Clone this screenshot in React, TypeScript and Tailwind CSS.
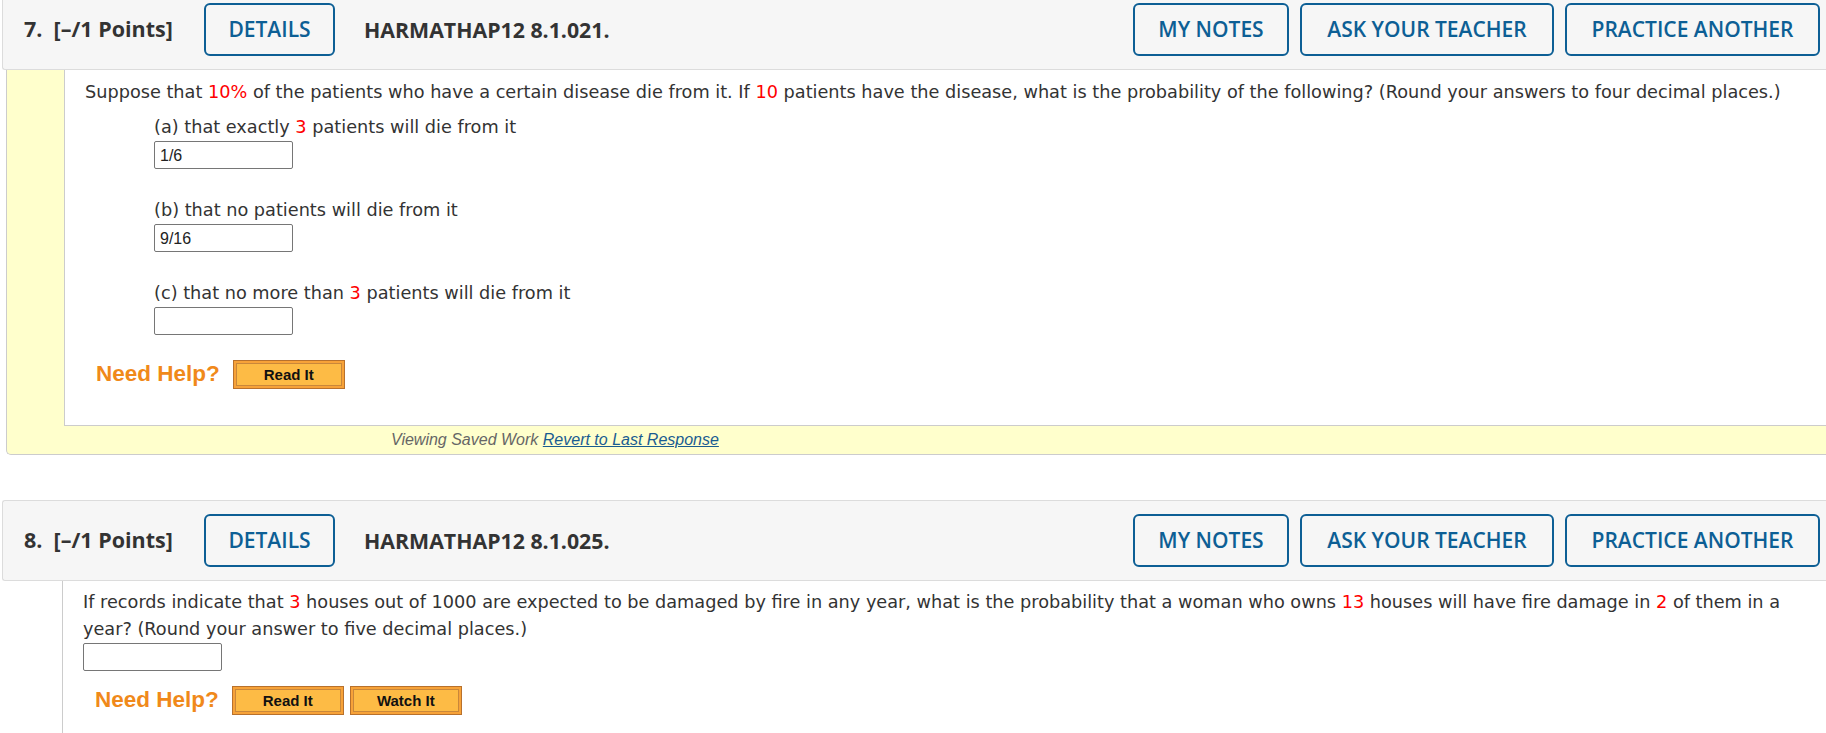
import React from "react";

const body = { fontFamily: '"DejaVu Sans", Verdana, sans-serif' };
const head = { fontFamily: '"Open Sans", "Liberation Sans", sans-serif' };
const arial = { fontFamily: '"Liberation Sans", Arial, sans-serif' };

const Red: React.FC<{ children: React.ReactNode }> = ({ children }) => (
  <span className="text-[#ff0000]">{children}</span>
);

const OutlineButton: React.FC<{ label: string; width: string }> = ({ label, width }) => (
  <button
    className={`${width} h-[53px] shrink-0 rounded-[6px] border-2 border-[#0d5f95] bg-[#f6f6f6] text-[21px] font-semibold text-[#0d5f95] flex items-center justify-center`}
    style={head}
  >
    {label}
  </button>
);

const HelpButton: React.FC<{ label: string }> = ({ label }) => (
  <button className="w-[112px] h-[29px] border border-[#b8712c] bg-[#f7a238] p-[2px] shrink-0">
    <div
      className="h-full w-full border border-[#c9873a] bg-[#fdbb45] flex items-center justify-center text-[15px] font-bold text-[#111] leading-none"
      style={arial}
    >
      {label}
    </div>
  </button>
);

const QuestionHeader: React.FC<{ num: number; code: string }> = ({ num, code }) => (
  <div className="ml-[2px] h-[81px] border-t border-l border-b border-[#dcdcdc] rounded-l-[3px] bg-[#f6f6f6] flex items-center pr-[6px]">
    <div className="w-[201px] pl-[21px] shrink-0 text-[21.5px] font-bold text-[#333] whitespace-nowrap" style={head}>
      {num}.&nbsp;&nbsp;[–/1 Points]
    </div>
    <OutlineButton label="DETAILS" width="w-[131px]" />
    <div className="ml-[29px] text-[21.3px] font-bold text-[#333] whitespace-nowrap" style={head}>
      {code}
    </div>
    <div className="ml-auto flex items-center gap-[11px]">
      <OutlineButton label="MY NOTES" width="w-[156px]" />
      <OutlineButton label="ASK YOUR TEACHER" width="w-[254px]" />
      <OutlineButton label="PRACTICE ANOTHER" width="w-[255px]" />
    </div>
  </div>
);

const AnswerBox: React.FC<{ value?: string; className?: string }> = ({ value, className }) => (
  <div
    className={`w-[139px] h-[28px] border border-[#767676] rounded-[2px] bg-white px-[5px] flex items-center text-[16px] text-[#222] ${className ?? ""}`}
    style={arial}
  >
    {value}
  </div>
);

const NeedHelp: React.FC<{ buttons: string[] }> = ({ buttons }) => (
  <div className="flex items-center">
    <span className="text-[22.5px] font-bold text-[#f0891a] mr-[13px] leading-none" style={arial}>
      Need Help?
    </span>
    <div className="flex gap-[6px]">
      {buttons.map((b) => (
        <HelpButton key={b} label={b} />
      ))}
    </div>
  </div>
);

const parts = [
  { label: "(a) that exactly ", num: "3", rest: " patients will die from it", value: "1/6" },
  { label: "(b) that no patients will die from it", num: "", rest: "", value: "9/16" },
  { label: "(c) that no more than ", num: "3", rest: " patients will die from it", value: "" },
];

export default function App() {
  return (
    <div className="w-[1826px] h-[733px] overflow-hidden bg-white">
      <div className="-mt-[11px]">
        {/* Question 7 */}
        <QuestionHeader num={7} code="HARMATHAP12 8.1.021." />
        <div className="ml-[6px] border-l border-b border-[#cccccc] rounded-bl-[5px] bg-[#ffffcc]">
          <div className="ml-[57px] bg-white border-l border-b border-[#cccccc] pt-[9px] pb-[36px] pl-[20px] text-[17.7px] text-[#333] leading-[27px]" style={body}>
            <div className="whitespace-nowrap">
              Suppose that <Red>10%</Red> of the patients who have a certain disease die from it. If <Red>10</Red> patients have the disease, what is the probability of the following? (Round your answers to four decimal places.)
            </div>
            <div className="ml-[69px] mt-[8px]">
              {parts.map((p) => (
                <div key={p.label} className="mb-[28px]">
                  <div className="h-[27px] whitespace-nowrap">
                    {p.label}
                    {p.num && <Red>{p.num}</Red>}
                    {p.rest}
                  </div>
                  <AnswerBox value={p.value} />
                </div>
              ))}
            </div>
            <div className="ml-[11px] -mt-[3px]">
              <NeedHelp buttons={["Read It"]} />
            </div>
          </div>
          <div className="h-[28px] flex items-center pl-[384px] text-[16px] italic text-[#666]" style={arial}>
            Viewing Saved Work&nbsp;<span className="text-[#1a5c91] underline">Revert to Last Response</span>
          </div>
        </div>

        {/* Question 8 */}
        <div className="mt-[45px]">
          <QuestionHeader num={8} code="HARMATHAP12 8.1.025." />
          <div className="ml-[62px] border-l border-[#cccccc] h-[200px] pt-[8px] pl-[20px] text-[17.7px] text-[#333] leading-[27px]" style={body}>
            <div className="whitespace-nowrap">
              If records indicate that <Red>3</Red> houses out of 1000 are expected to be damaged by fire in any year, what is the probability that a woman who owns <Red>13</Red> houses will have fire damage in <Red>2</Red> of them in a
            </div>
            <div className="whitespace-nowrap">year? (Round your answer to five decimal places.)</div>
            <AnswerBox />
            <div className="mt-[15px] ml-[12px]">
              <NeedHelp buttons={["Read It", "Watch It"]} />
            </div>
          </div>
        </div>
      </div>
    </div>
  );
}
